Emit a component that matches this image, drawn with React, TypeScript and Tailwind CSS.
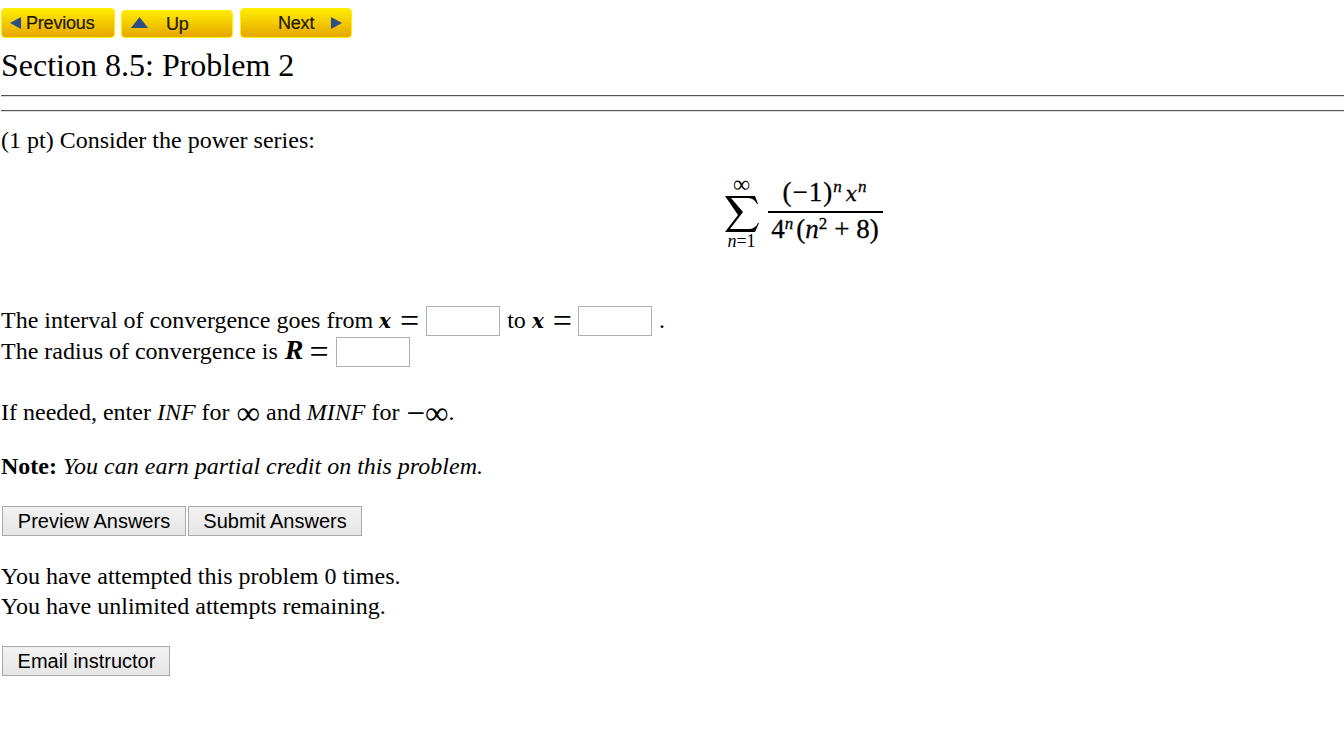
// App.tsx
const serif = "font-['Liberation_Serif','Times_New_Roman',serif]";
const sans = "font-['Liberation_Sans',Arial,sans-serif]";

function NavButton({ label, icon, className, textClass }: { label: string; icon: "left" | "up" | "right"; className: string; textClass: string }) {
  const triangle = { left: "0,6 11,0 11,12", up: "0,11 8.5,0 17,11", right: "0,0 11,6 0,12" }[icon];
  const svg = (
    <svg width={icon === "up" ? 17 : 11} height={icon === "up" ? 11 : 12} className={`shrink-0 ${icon === "up" ? "mb-[3px]" : ""}`}>
      <polygon points={triangle} fill="#2b4f86" />
    </svg>
  );
  return (
    <div className={`flex items-center rounded-[4px] border border-[#fff000] bg-gradient-to-b from-[#ffec00] to-[#e6a600] text-[18px] tracking-[-0.2px] text-[#1f1800] [-webkit-text-stroke:0.2px_#1f1800] ${sans} ${className}`}>
      {icon !== "right" && svg}
      <span className={textClass}>{label}</span>
      {icon === "right" && svg}
    </div>
  );
}

function GrayButton({ children, className }: { children: string; className: string }) {
  return (
    <button className={`h-[30px] border border-[#a9a9a9] bg-gradient-to-b from-[#f2f2f2] to-[#e6e6e6] text-[20px] leading-none text-black ${sans} ${className}`}>
      {children}
    </button>
  );
}

function AnswerBox() {
  return <input type="text" className="mx-[1px] mb-[2px] inline-block h-[30px] w-[74px] border border-[#b0b0b0] bg-white align-middle" />;
}

function MathVar({ children }: { children: string }) {
  return <span className="font-['DejaVu_Serif',serif] text-[20px] font-bold italic">{children}</span>;
}

function Eq({ className = "ml-[9px] mr-[6px]" }: { className?: string }) {
  return <span className={`align-[-4px] text-[34px] leading-[20px] ${className}`}>=</span>;
}

function Big({ children }: { children: string }) {
  return <span className="ml-[1px] align-[-4px] text-[33px] leading-[20px]">{children}</span>;
}

function Sup({ children, italic = true }: { children: string; italic?: boolean }) {
  return <sup className={`top-[-9px] text-[17px] ${italic ? "italic" : ""}`}>{children}</sup>;
}

function Formula() {
  return (
    <div className={`flex items-center justify-center pl-[260px] text-black ${serif}`}>
      <div className="flex w-[38px] flex-col items-center">
        <span className="h-[12px] text-[24px] leading-[12px]">∞</span>
        <svg width="36" height="38" viewBox="0 0 36 38" className="mt-[5px] mb-[2px]">
          <path d="M1 1H31L34 9H33C31 5 28 3 23 3H7L19 17L6 34H24C29 34 32 32 34 28H35L31 37H1L14 20Z" fill="#000" />
        </svg>
        <span className="text-[18px] leading-[12px] italic">
          n<span className="not-italic">=1</span>
        </span>
      </div>
      <div className="ml-[7px] flex flex-col items-center [-webkit-text-stroke:0.3px_#000]">
        <div className="h-[31px] text-[27px] leading-[24px] tracking-[1px] whitespace-nowrap">
          (−1)<Sup>n</Sup>
          <span className="ml-[3px] font-['DejaVu_Serif',serif] text-[20px] italic">x</span>
          <Sup>n</Sup>
        </div>
        <div className="h-[34px] w-[115px] border-t-2 border-black text-center text-[27px] leading-[32px] whitespace-nowrap">
          4<Sup>n</Sup>
          <span className="ml-[3px]">(</span>
          <i>n</i>
          <Sup italic={false}>2</Sup>
          <span className="mx-[7px]">+</span>8)
        </div>
      </div>
    </div>
  );
}

export default function App() {
  return (
    <div className={`min-h-[756px] bg-white pt-[8px] pl-[1px] text-[24px] leading-[30px] text-black ${serif}`}>
      <div className="flex h-[30px] items-end">
        <NavButton label="Previous" icon="left" className="h-[30px] w-[114px] pl-[8px]" textClass="ml-[5px]" />
        <NavButton label="Up" icon="up" className="ml-[6px] h-[28px] w-[112px] pl-[9px]" textClass="ml-[18px]" />
        <NavButton label="Next" icon="right" className="ml-[7px] h-[30px] w-[112px] pl-[37px]" textClass="mr-[17px]" />
      </div>
      <h1 className="mt-[8px] h-[38px] text-[32px] leading-[38px] font-normal">Section 8.5: Problem 2</h1>
      <div className="mt-[11px] h-[2px] border-t border-[#555] bg-[#ddd]" />
      <div className="mt-[13px] h-[2px] border-t border-[#555] bg-[#ddd]" />
      <p className="mt-[13px]">(1 pt) Consider the power series:</p>
      <div className="mt-[23px] h-[70px]">
        <Formula />
      </div>
      <div className="mt-[57px] whitespace-nowrap">
        <p className="h-[31px]">
          The interval of convergence goes from <MathVar>x</MathVar>
          <Eq />
          <AnswerBox /> to <MathVar>x</MathVar>
          <Eq className="ml-[9px] mr-[5px]" />
          <AnswerBox /> .
        </p>
        <p className="h-[31px]">
          The radius of convergence is <span className="ml-[1px] text-[28px] leading-[20px] font-bold italic">R</span>
          <Eq className="ml-[6px] mr-[6px]" />
          <AnswerBox />
        </p>
      </div>
      <p className="mt-[30px]">
        If needed, enter <i>INF</i> for <Big>∞</Big> and <i>MINF</i> for <Big>−∞</Big>.
      </p>
      <p className="mt-[24px]">
        <b>Note:</b> <i>You can earn partial credit on this problem.</i>
      </p>
      <div className="mt-[25px] ml-[1px] flex gap-[2px]">
        <GrayButton className="w-[184px]">Preview Answers</GrayButton>
        <GrayButton className="w-[174px]">Submit Answers</GrayButton>
      </div>
      <p className="mt-[25px]">You have attempted this problem 0 times.</p>
      <p>You have unlimited attempts remaining.</p>
      <div className="mt-[24px] ml-[1px]">
        <GrayButton className="w-[168px] pl-[1px]">Email instructor</GrayButton>
      </div>
    </div>
  );
}
